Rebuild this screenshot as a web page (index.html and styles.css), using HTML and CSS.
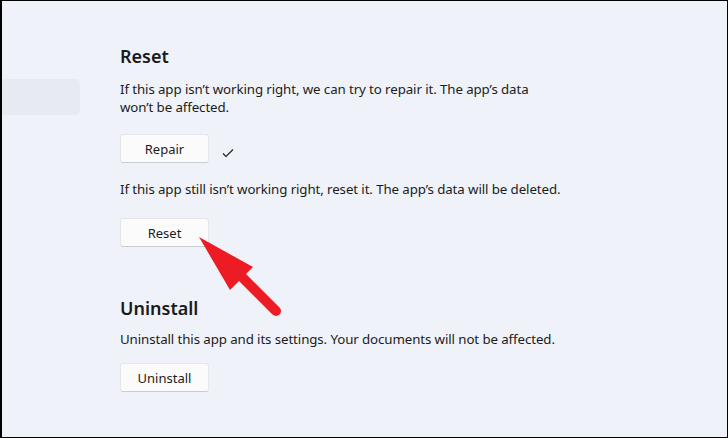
FILE: index.html
```html
<!DOCTYPE html>
<html lang="en">
<head>
<meta charset="utf-8">
<title>Reset</title>
<link rel="stylesheet" href="styles.css">
</head>
<body>
<div class="frame">
  <aside class="sidebar">
    <div class="nav-item"></div>
  </aside>
  <main class="content">
    <section class="section">
      <h2 class="title">Reset</h2>
      <p class="desc d1">If this app isn’t working right, we can try to repair it. The app’s data<br>won’t be affected.</p>
      <div class="action-row r1">
        <button class="btn">Repair</button>
        <svg class="check" width="12" height="10" viewBox="0 0 12 10"><path d="M1 5.5 L4 8.5 L11 1.5" fill="none" stroke="#1b1b1b" stroke-width="1.1"/></svg>
      </div>
      <p class="desc d2">If this app still isn’t working right, reset it. The app’s data will be deleted.</p>
      <div class="action-row r2">
        <button class="btn">Reset</button>
      </div>
    </section>
    <section class="section second">
      <h2 class="title">Uninstall</h2>
      <p class="desc d3">Uninstall this app and its settings. Your documents will not be affected.</p>
      <div class="action-row r3">
        <button class="btn">Uninstall</button>
      </div>
    </section>
  </main>
  <svg class="arrow" width="728" height="438" viewBox="0 0 728 438">
    <line x1="238" y1="273" x2="276" y2="311" stroke="#ed1c24" stroke-width="10" stroke-linecap="round"/>
    <polygon points="199,237 253,267 230,290" fill="#ed1c24"/>
  </svg>
</div>
</body>
</html>
```
FILE: styles.css
```css
* { box-sizing: border-box; }
html, body { margin: 0; padding: 0; }
body {
  font-family: "Noto Sans", "Open Sans", sans-serif;
  color: #1b1b1b;
  background: #000;
}
.frame {
  position: relative;
  width: 728px;
  height: 438px;
  border: 1px solid #000;
  border-left-width: 2px;
  background: #eff3f9;
  display: flex;
  overflow: hidden;
}
.sidebar {
  width: 78px;
  flex: none;
  padding-top: 78px;
}
.nav-item {
  height: 36px;
  background: #e7eaf0;
  border-radius: 0 5px 5px 0;
}
.content {
  padding-left: 40px;
  padding-top: 41px;
  flex: 1;
}
.section { display: flex; flex-direction: column; }
.second { margin-top: 47px; }
.title {
  margin: 0;
  font-size: 18px;
  font-weight: 600;
  line-height: 28px;
  color: #1a1a1a;
}
.desc {
  margin: 0;
  font-size: 13.3px;
  line-height: 18px;
  letter-spacing: -0.1px;
  color: #1b1b1b;
  white-space: nowrap;
}
.d1 { margin-top: 10px; }
.d2 { margin-top: 17px; }
.d3 { margin-top: 8px; }
.action-row {
  display: flex;
  align-items: center;
  gap: 13px;
}
.r1 { margin-top: 18px; }
.r2 { margin-top: 20px; }
.r3 { margin-top: 15px; }
.btn {
  width: 89px;
  height: 29px;
  font-family: inherit;
  font-size: 13px;
  color: #1b1b1b;
  background: #fbfbfc;
  border: 1px solid #e4e6ea;
  border-bottom-color: #c9ccd1;
  border-radius: 3px;
  padding: 0;
}
.check { margin-top: 8px; }
.arrow {
  position: absolute;
  left: -2px;
  top: -1px;
  pointer-events: none;
}
```
